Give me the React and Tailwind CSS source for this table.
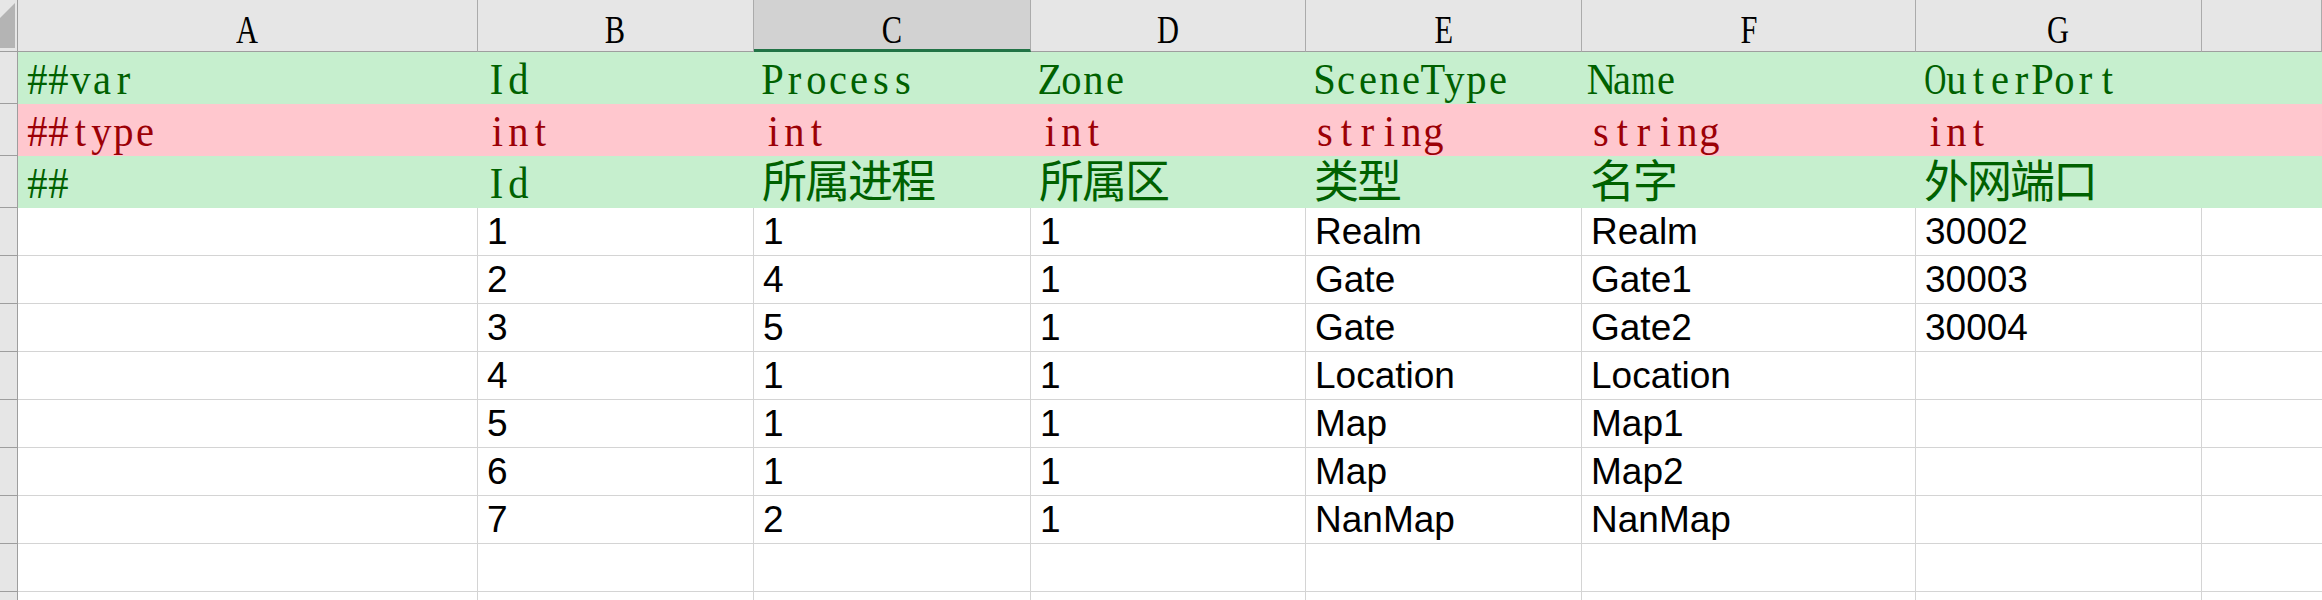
const COLS = 'grid grid-cols-[18px_460px_276px_277px_275px_276px_334px_286px_1fr]';

const LETTERS = ['A', 'B', 'C', 'D', 'E', 'F', 'G', ''];

const META = [
  { tone: 'good', cells: ['##var', 'Id', 'Process', 'Zone', 'SceneType', 'Name', 'OuterPort'] },
  { tone: 'bad', cells: ['##type', 'int', 'int', 'int', 'string', 'string', 'int'] },
  { tone: 'good', cells: ['##', 'Id', '所属进程', '所属区', '类型', '名字', '外网端口'] },
];

const ROWS = [
  ['', '1', '1', '1', 'Realm', 'Realm', '30002'],
  ['', '2', '4', '1', 'Gate', 'Gate1', '30003'],
  ['', '3', '5', '1', 'Gate', 'Gate2', '30004'],
  ['', '4', '1', '1', 'Location', 'Location', ''],
  ['', '5', '1', '1', 'Map', 'Map1', ''],
  ['', '6', '1', '1', 'Map', 'Map2', ''],
  ['', '7', '2', '1', 'NanMap', 'NanMap', ''],
  ['', '', '', '', '', '', ''],
  ['', '', '', '', '', '', ''],
];

// SimSun style: half-width latin, full-width CJK
function Mono({ text }) {
  return [...text].map((ch, i) => {
    if (/[\u3000-\u9fff]/.test(ch)) {
      return <span key={i} className="inline-block w-[43px] text-left">{ch}</span>;
    }
    const wide = /[mMOWw]/.test(ch);
    return (
      <span key={i} className="inline-flex w-[21.6px] justify-center">
        <span className={wide ? 'inline-block scale-x-[0.68]' : 'inline-block scale-x-[0.9]'}>{ch}</span>
      </span>
    );
  });
}

function StripCell() {
  return <div className="bg-[#e6e6e6] border-r border-b border-[#9e9e9e]" />;
}

export default function App() {
  return (
    <div className="w-[2322px] h-[600px] overflow-hidden bg-white">
      {/* column letters */}
      <div className={`${COLS} h-[52px]`}>
        <div className="relative bg-[#e6e6e6] border-r border-b border-[#9e9e9e]">
          <svg className="absolute left-0 top-0" width="17" height="51" viewBox="0 0 17 51">
            <polygon points="15,3 15,48 0,48 0,18" fill="#b4b4b4" />
          </svg>
        </div>
        {LETTERS.map((l, i) => (
          <div
            key={i}
            className={
              l === 'C'
                ? 'bg-[#d2d2d2] border-r border-[#ababab] border-b-[3px] border-b-[#217346] text-center pt-[10px] leading-none text-[39px] text-black font-["Liberation_Serif",serif]'
                : 'bg-[#e6e6e6] border-r border-[#ababab] border-b border-b-[#9e9e9e] text-center pt-[10px] leading-none text-[39px] text-black font-["Liberation_Serif",serif]'
            }
          >
            <span className="inline-block scale-x-[0.78]">{l}</span>
          </div>
        ))}
      </div>

      {/* meta rows */}
      {META.map((row, r) => (
        <div key={r} className={`${COLS} h-[52px]`}>
          <StripCell />
          {row.cells.map((c, i) => (
            <div
              key={i}
              className={`${row.tone === 'good' ? 'bg-[#c6efce] text-[#006100]' : 'bg-[#ffc7ce] text-[#9c0006]'} whitespace-nowrap pl-[8px] pt-[5px] leading-none text-[45px] font-["Liberation_Serif","Noto_Sans_CJK_SC",serif]`}
            >
              <Mono text={c} />
            </div>
          ))}
          <div className={row.tone === 'good' ? 'bg-[#c6efce]' : 'bg-[#ffc7ce]'} />
        </div>
      ))}

      {/* data rows */}
      {ROWS.map((row, r) => (
        <div key={r} className={`${COLS} h-12`}>
          <StripCell />
          {row.map((c, i) => (
            <div
              key={i}
              className='border-r border-b border-[#d4d4d4] pl-[9px] leading-[47px] text-[37px] text-black whitespace-nowrap font-["Liberation_Sans",Arial,sans-serif]'
            >
              {c}
            </div>
          ))}
          <div className="border-b border-[#d4d4d4]" />
        </div>
      ))}
    </div>
  );
}
